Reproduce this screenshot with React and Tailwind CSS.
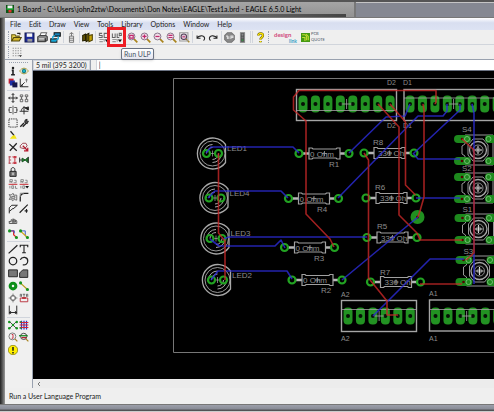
import React, { useState } from 'react';

const menus = ['File', 'Edit', 'Draw', 'View', 'Tools', 'Library', 'Options', 'Window', 'Help'];

const Icon = ({ children, className = 'h-[11px] w-[11px]' }) => (
  <svg
    className={`block shrink-0 ${className}`}
    viewBox="0 0 16 16"
    fill="none"
    stroke="#222"
    strokeWidth="1.5"
    aria-hidden="true"
  >
    {children}
  </svg>
);

const Magnifier = ({ color = '#c02a6c', children }) => (
  <Icon>
    <path d="M10 10l5 5" stroke="#a9831c" strokeWidth="2.5" />
    <circle cx="6.5" cy="6.5" r="5" fill="#f0dfe8" stroke="#7d6a80" strokeWidth="1.3" />
    <g stroke={color} strokeWidth="1.8">{children}</g>
  </Icon>
);

const Grip = ({ vertical }) =>
  vertical ? (
    <span className="mx-px h-3 border-l border-dotted border-gray-400" />
  ) : (
    <span className="mx-1 border-t border-dotted border-gray-400" />
  );

const Separator = () => <span className="h-3 w-px shrink-0 bg-gray-300" />;

/* ---------- action toolbar icons ---------- */
const actionIcons = {
  open: (
    <Icon>
      <path d="M1 13V4h5l1 2h5v3" fill="#e8d44d" stroke="#6b5c10" />
      <path d="M1 13l3-5h11l-3 5z" fill="#d2b52a" stroke="#51460b" />
      <path d="M9 2h4v2" />
    </Icon>
  ),
  save: (
    <Icon>
      <path d="M1.500 1.500h13v13h-13z" fill="#1c2a9a" stroke="#10164d" />
      <path d="M4 2h8v5H4z" fill="#f5f5f5" stroke="none" />
      <path d="M5 10h7v4H5z" fill="#999" stroke="none" />
    </Icon>
  ),
  print: (
    <Icon>
      <path d="M4 6l2-5h8l-2 5" fill="#fff" stroke="#666" />
      <path d="M1 7l3-2h9l2 2v5l-3 2H1z" fill="#888" stroke="#444" />
      <path d="M3 10h8" stroke="#eee" />
      <path d="M12 9v4" stroke="#222" />
    </Icon>
  ),
  cam: (
    <Icon>
      <path d="M6 1h9v5H6z" fill="#1683b8" stroke="#111" />
      <path d="M1 10h9v5H1z" fill="#16a8d8" stroke="#222" />
      <path d="M12 6v4L9 12M4 10V7l3-2" stroke="#1aa7d9" strokeWidth="2" />
    </Icon>
  ),
  sheet: (
    <Icon>
      <path d="M5 6h6v9H5zM5 9h6M5 12h6" stroke="#666" strokeWidth="1.2" />
      <path d="M5 3l3-2 3 2M8 1v5" stroke="#666" strokeWidth="1.2" />
    </Icon>
  ),
  library: (
    <Icon>
      <path d="M1 5l4-2v9l-4 1zM6 4l4-2v10l-4 2z" fill="#635400" stroke="#262000" />
      <path d="M10 5l5-1v8l-5 2z" fill="#c5a300" stroke="#4c3f00" />
    </Icon>
  ),
  script: (
    <Icon>
      <path d="M6 2H2v3h4v3H1M13 2H9v6h5" stroke="#666" />
      <path d="M2 11h6M2 14h5M9 10v4" stroke="#999" />
      <path d="M10 11h6l-3 4z" fill="#111" stroke="none" />
    </Icon>
  ),
  ulp: (
    <Icon>
      <path d="M2 2v6h4V2M9 2v6h3M12 6V2h3v3h-3" stroke="#666" />
      <path d="M2 11h6M2 14h5M9 10v4" stroke="#999" />
      <path d="M10 11h6l-3 4z" fill="#111" stroke="none" />
    </Icon>
  ),
  fit: <Magnifier><path d="M4 5h5v4H4z" /></Magnifier>,
  zoomIn: <Magnifier><path d="M3.500 6.500h6M6.500 3.500v6" /></Magnifier>,
  zoomOut: <Magnifier><path d="M3.500 6.500h6" /></Magnifier>,
  redraw: <Magnifier><path d="M3.500 5h6M3.500 8h6" /></Magnifier>,
  select: (
    <Icon>
      <path d="M10 10l5 5" stroke="#a9831c" strokeWidth="2" />
      <path d="M1 1h12v12H1z" stroke="#999" />
      <circle cx="7" cy="7" r="4" fill="#dbc8d5" stroke="#54405a" />
      <path d="M5 7h4" stroke="#c02a6c" />
    </Icon>
  ),
  undo: <Icon><path d="M3 5v4h5M3 9c2-4 10-5 11 0 0 2-1 3-2 3" /></Icon>,
  redo: <Icon><path d="M13 5v4H8M13 9C11 5 3 4 2 9c0 2 1 3 2 3" /></Icon>,
  stop: (
    <Icon>
      <path d="M5 1h6l4 4v6l-4 4H5l-4-4V5z" fill="#888" stroke="#777" />
      <path d="M3 6h2v4M7 6v4M10 10V6h3v2h-3" stroke="#ddd" />
    </Icon>
  ),
  go: (
    <Icon>
      <path d="M5 1h6v14H5z" fill="#555" stroke="#888" />
      <circle cx="8" cy="4" r="1.500" fill="#888" stroke="none" />
      <circle cx="8" cy="8" r="1.500" fill="#777" stroke="none" />
      <circle cx="8" cy="12" r="1.500" fill="#3d8d49" stroke="none" />
    </Icon>
  ),
  help: (
    <Icon>
      <path d="M5 5c0-4 7-4 6.500 0 0 3-3.500 3-3.500 6M8 13v2" stroke="#5d5500" strokeWidth="3.500" />
      <path d="M5 5c0-4 7-4 6.500 0 0 3-3.500 3-3.500 6M8 13v2" stroke="#ffe600" strokeWidth="2" />
    </Icon>
  ),
};

const actionGroups = [
  [['Open', 'open'], ['Save', 'save'], ['Print', 'print'], ['CAM', 'cam']],
  [['Schematic', 'sheet']],
  [['Library', 'library']],
  [['Run SCR', 'script'], ['Run ULP', 'ulp']],
  [['Fit', 'fit'], ['Zoom in', 'zoomIn'], ['Zoom out', 'zoomOut'], ['Redraw', 'redraw'], ['Select', 'select']],
  [['Undo', 'undo'], ['Redo', 'redo']],
  [['Stop', 'stop'], ['Go', 'go']],
];

/* ---------- command palette icons ---------- */
const wirePads = (
  <g fill="#15931f" stroke="none">
    <circle cx="2.500" cy="3" r="2.500" />
    <circle cx="13.500" cy="13.500" r="2.500" />
  </g>
);

const paletteGroups = [
  {
    height: 'h-[24px]',
    tools: [
      ['Info', <><path d="M6 7h2v7M5 14h6" strokeWidth="2.5" /><circle cx="8" cy="3" r="2" fill="#222" stroke="none" /></>],
      ['Show', <><path d="M1 8c4-6 10-6 14 0-4 6-10 6-14 0z" fill="#fff" stroke="#a89a35" /><circle cx="8" cy="8" r="3" fill="#16b6c6" stroke="#12686e" /></>],
      ['Display', <><path d="M1 1h8v8H1z" fill="#c9202b" stroke="none" /><path d="M3 4h8v8H3z" fill="#1c2fa8" stroke="none" /><path d="M7 7h8v8H7z" fill="#17174b" stroke="none" /></>],
      ['Mark', <><path d="M2 1v13h13M2 14l7-7M5 10v4" /><path d="M10 3h4M12 1v6" stroke="#777" /></>],
    ],
  },
  {
    height: 'h-[148px]',
    tools: [
      ['Move', <path d="M8 1v14M1 8h14M6 3l2-2 2 2M6 13l2 2 2-2M3 6L1 8l2 2M13 6l2 2-2 2" />],
      ['Copy', <path d="M2 3h4v3H2zM10 3h4v3h-4zM2 10h4v4H2zM10 10h4v4h-4zM4 6v4M12 6v4" strokeWidth="1.2" stroke="#444" />],
      ['Mirror', <path d="M8 1v14M6 4H2v8h4M10 4h4v8h-4M0 8h3M13 8h3" stroke="#555" />],
      ['Rotate', <><path d="M8 2v13M1 10h14M4 9c0-6 8-7 10-2" /><path d="M10 5l5 3 0-5z" fill="#222" /></>],
      ['Group', <path d="M1.500 1.500h13v13h-13z" strokeDasharray="2 1.500" />],
      ['Change', <><path d="M2 14L8 8M6 14l7-7" strokeWidth="2.200" /><path d="M9 7l1-4 3-1-1 3 3 0-2 4z" fill="#555" /></>],
      ['Paste', <><path d="M4 2l6 7" strokeWidth="2" /><path d="M7 9l4-1 3 6H3z" fill="#f4e51a" stroke="none" /></>],
      null,
      ['Delete', <path d="M2 3l12 11M14 2L3 14" strokeWidth="2" />],
      ['Add', <><path d="M2 9V6l4-4h5l2 4-4 5z" stroke="#9d4450" /><path d="M6 6l8 8M14 9v5H8" stroke="#b5182d" strokeWidth="2" /></>],
      ['Pinswap', <><path d="M2 2v12M1 3h4M1 13h4M3 8h2" stroke="#b4404d" /><path d="M11 2v12M7 3h7M7 13h7M9 5l2-3 2 3M9 11l2 3 2-3" stroke="#c22835" /></>],
      ['Replace', <><path d="M1 4v8M1 8h4M11 8h4M15 3v10" /><path d="M5 5l5 3-5 3zM14 4l-4 4 4 4z" fill="#1b8f2c" stroke="#184f22" /></>],
      ['Lock', <><path d="M5 7V4c0-4 6-4 6 0v3" /><path d="M3 7h10v8H3z" fill="#777" /><path d="M8 9v4" stroke="#fff" /></>],
      null,
      ['Name', <><path d="M3 6V1h4v3H3l4 2M10 2h3v4h-4M3 11v4M6 11h3v4H6zM12 11v4h3" stroke="#888" /><path d="M1 8.500h14" stroke="#c52028" /></>],
      ['Value', <><path d="M3 6V1h4v3H3l4 2M10 2h3v4h-4M3 11v4M6 11h3v4H6z" stroke="#888" /><path d="M1 8.500h14" stroke="#c52028" /><path d="M10 11h6l-3 4z" fill="#111" stroke="none" /></>],
      ['Smash', <path d="M2 4l3 1 3-3 1 3h5v8l-4-1-3 2-1-3-4 1 2-4zM6 7h5v3H6z" stroke="#666" />],
      ['Miter', <><path d="M2 15V9c0-5 3-7 7-7h6" strokeWidth="2" /><path d="M2 8V2h6" stroke="#888" /></>],
      ['Split', <path d="M2 15V6l4-4h9L8 8M2 12l6-5" />],
      ['Optimize', <path d="M1 14L14 1M9 11h5M12 8v6" strokeWidth="1.8" />],
      ['Meander', <path d="M2 8v4h12V8M2 9h3V6h2v5M9 11V5H7M9 5h1v5h2V6l2 2" stroke="#555" />],
      null,
      ['Route', <><path d="M3 3h6v6l4 4" stroke="#e02727" strokeWidth="2" /><path d="M3 3h7v4" stroke="#304fd0" />{wirePads}</>],
      ['Ripup', <><path d="M3 3h7v8l4 3" stroke="#3857cb" /><path d="M2 3l12 11" stroke="#d0a617" strokeWidth="2" />{wirePads}</>],
    ],
  },
  {
    height: 'h-[73px]',
    tools: [
      ['Wire', <path d="M1 15L15 2" strokeWidth="2" />],
      ['Text', <path d="M2 5V2h12v3M8 2v12M5 14h6" strokeWidth="1.8" />],
      ['Circle', <circle cx="8" cy="8" r="6" strokeWidth="2" />],
      ['Arc', <path d="M2 6c3-6 12-5 12 2 0 5-4 7-8 6" strokeWidth="2" />],
      ['Rect', <path d="M1 3h14v11H1z" fill="#777" />],
      ['Polygon', <path d="M1 15V8l5-5h8v12z" fill="#777" />],
      ['Via', <><circle cx="8" cy="8" r="7" fill="#0c8e18" stroke="none" /><circle cx="8" cy="8" r="2" fill="#f4f4f4" stroke="none" /></>],
      ['Signal', <><path d="M2 3l12 11" stroke="#b69b16" strokeWidth="1.800" />{wirePads}</>],
      ['Hole', <><circle cx="8" cy="8" r="4" stroke="#555" /><path d="M8 1v14M1 8h14" stroke="#777" /><circle cx="8" cy="8" r="2" fill="#fff" stroke="none" /></>],
      ['Attribute', <><path d="M2 6V2h2v4M6 2h4M8 2v4M12 6V2h2v4" stroke="#666" /><path d="M2 8h12v6H2z" stroke="#b9323c" /><path d="M5 8h6" stroke="#b9323c" strokeWidth="3" /></>],
      ['Dimension', <path d="M2 1v14M14 1v14M2 12h12M5 10l-3 2 3 2M11 10l3 2-3 2" />],
      null,
    ],
  },
  {
    height: 'h-[37px]',
    tools: [
      ['Ratsnest', <><path d="M2 2l12 12M14 2L2 14" stroke="#444" /><g fill="#15931f" stroke="none"><circle cx="2" cy="3" r="2" /><circle cx="14" cy="3" r="2" /><circle cx="2" cy="13" r="2" /><circle cx="14" cy="13" r="2" /><circle cx="8" cy="8" r="2" /></g></>],
      ['Auto', <><path d="M4 1v14M8 1v14M12 1v14" stroke="#2536c5" strokeWidth="2" /><path d="M1 4h14M1 8h14M1 12h14" stroke="#d52539" strokeWidth="1.800" /><path d="M1 3h3M1 13h3" stroke="#15931f" strokeWidth="2" /></>],
      ['ERC', <><path d="M11 11l4 4" stroke="#a9831c" strokeWidth="2" /><circle cx="7" cy="7" r="5.500" stroke="#777" /><path d="M6 4h2v6H6" stroke="#c6283b" /></>],
      ['DRC', <><path d="M11 11l4 4" stroke="#a9831c" strokeWidth="2" /><circle cx="7.500" cy="7" r="5" stroke="#444" /><path d="M0 6h14" stroke="#16801e" strokeWidth="2" /><path d="M4 9h8" stroke="#b52335" strokeWidth="2" /></>],
      ['Errors', <><circle cx="8" cy="8" r="7.500" fill="#fff000" stroke="#9b921d" /><path d="M8 3v6M8 11v2.500" strokeWidth="2.500" /></>],
      null,
    ],
  },
];

/* ---------- board drawing ---------- */
const blueTraces = [
  '206,153 211,147 293,147 299,153',
  '208,198 215,191 281,191 288,198',
  '223,239 229,237 367,237',
  '210,239 219,246 275,246 281,240 285,248',
  '211,280 218,271 287,271 292,279',
  '349,153 386,117 405,116 410,104',
  '338,198 418,116 443,116 447,111 447,104',
  '414,153 460,110 460,104',
  '413,153 418,159 460,159',
  '416,198 460,198',
  '472,104 474,113 474,284',
  '342,280 418,217',
  '373,316 430,259 464,259',
];

const redTraces = [
  '435,104 436,102 436,90.5 299,90.5 293.500,97 293.500,110 306,121 306,214 330,239 334,247',
  '218.500,153 218.500,233 225,241 225,280',
  '378,104 399,127 399,215 417,233 420,240 462,240',
  '390,104 405.500,122 405.500,185 415.500,195',
  '423,104 424,110 424,197 420,211 418,217',
  '364,153 368.500,160 368.500,278 387,301 387,315 398,315',
  '420,284 462,284',
  '462,139 474,150 474,253 466,260',
];

const leds = [
  { name: 'LED1', x: 212.5, y: 153.5 },
  { name: 'LED4', x: 215, y: 198 },
  { name: 'LED3', x: 216, y: 238.500 },
  { name: 'LED2', x: 217.5, y: 280 },
];

const resistors = [
  { name: 'R1', x: 299, y: 153.5, lx: 329, ly: 167 },
  { name: 'R4', x: 288.5, y: 198.5, lx: 317, ly: 212 },
  { name: 'R3', x: 284.5, y: 247.5, lx: 314, ly: 261 },
  { name: 'R2', x: 292, y: 280, lx: 321, ly: 293 },
  { name: 'R8', x: 364, y: 153, lx: 373, ly: 145, wide: true },
  { name: 'R6', x: 366, y: 198, lx: 375, ly: 190, wide: true },
  { name: 'R5', x: 367, y: 237.5, lx: 377, ly: 229, wide: true },
  { name: 'R7', x: 370.5, y: 282, lx: 380, ly: 275, wide: true },
];

const headers = [
  { name: 'D2', x: 296.5, y: 89.5, w: 100, mid: 110.5, first: 303, count: 8, padY: 104, lx: 387, top: 85, bottom: 128 },
  { name: 'D1', x: 404, y: 89.5, w: 110, mid: 98, first: 410, count: 8, padY: 104, lx: 403, top: 85, bottom: 128 },
  { name: 'A2', x: 341.5, y: 300.5, w: 75, mid: 309.5, first: 348, count: 6, padY: 316, lx: 341, top: 297, bottom: 341 },
  { name: 'A1', x: 429.5, y: 300, w: 90, mid: 309.5, first: 435.5, count: 6, padY: 316, lx: 429, top: 296, bottom: 341 },
];

const switches = [
  { name: 'S4', x: 478, y: 150, ly: 132 },
  { name: 'S2', x: 478, y: 188, ly: 171 },
  { name: 'S1', x: 478.5, y: 229, ly: 212 },
  { name: 'S3', x: 479.5, y: 271, ly: 254 },
];

const Pad = ({ x, y, r = 3.500 }) => (
  <circle cx={x} cy={y} r={r} fill="none" stroke="#22a322" strokeWidth="2.200" />
);

const Led = ({ name, x, y }) => (
  <g fill="none" stroke="#a8a8a8">
    <path d={`M${x + 13} ${y - 9}A15.500 15.500 0 1 0 ${x + 13} ${y + 9}z`} strokeWidth="1.300" />
    <circle cx={x} cy={y} r="12.500" strokeWidth="0.900" />
    <path d={`M${x - 9} ${y}a9 9 0 0 1 9-9M${x - 6} ${y}a6 6 0 0 1 6-6M${x + 9} ${y}a9 9 0 0 1-9 9M${x + 6} ${y}a6 6 0 0 1-6 6`} />
    <path d={`M${x - 3} ${y}h6M${x} ${y - 3}v6`} strokeWidth="0.700" />
    <Pad x={x - 6} y={y} />
    <Pad x={x + 6} y={y} />
    <text x={x + 14.5} y={y - 2.500} fontSize="8" fill="#8d8d8d" stroke="none">{name}</text>
  </g>
);

const Resistor = ({ name, x, y, lx, ly, wide }) => (
  <g fill="none" stroke="#a0a0a0">
    <path d={`M${x + 3} ${y}h7M${x + 41} ${y}h6`} stroke="#b5b5b5" strokeWidth="2.500" />
    <path d={`M${x + 10} ${y - 5.500}h3l1 1h23l1-1h3v11h-3l-1-1h-23l-1 1h-3z`} strokeWidth="1.200" />
    <path d={`M${x + 23} ${y}h5M${x + 25.5} ${y - 2.500}v5`} strokeWidth="0.800" />
    <Pad x={x} y={y} />
    <Pad x={x + 50} y={y} />
    <text x={wide ? x + 14 : x + 11} y={y + 3} fontSize="8" fill="#909090" stroke="none">
      {wide ? '330 Oh' : '0 Ohm'}
    </text>
    <text x={lx} y={ly} fontSize="8" fill="#8d8d8d" stroke="none">{name}</text>
  </g>
);

const Header = ({ name, x, y, w, mid, first, count, padY, lx, top, bottom }) => (
  <g>
    {Array.from({ length: count }, (_, i) => (
      <g key={i}>
        <rect x={first + i * 12.45 - 4.500} y={padY - 8.5} width="9" height="17" rx="4" fill="#229222" />
        <circle cx={first + i * 12.45} cy={padY} r="2" fill="#061006" />
      </g>
    ))}
    <rect x={x} y={y} width={w} height="31" fill="none" stroke="#a5a5a5" strokeWidth="1.400" />
    <path d={`M${x} ${mid}h${w}`} stroke="#a5a5a5" strokeWidth="0.800" />
    <path
      d={`M${first + (count / 2 - 0.5) * 12.45 - 5} ${padY}h10M${first + (count / 2 - 0.5) * 12.45} ${padY - 5}v10`}
      stroke="#a5a5a5"
      strokeWidth="0.800"
    />
    <text x={lx} y={top} fontSize="7" fill="#8d8d8d">{name}</text>
    <text x={lx} y={bottom} fontSize="7" fill="#8d8d8d">{name}</text>
  </g>
);

const Switch = ({ name, x, y, ly }) => (
  <g fill="none" stroke="#a8a8a8">
    <path d={`M${x - 13} ${y - 15}h28v30h-28v-9l-3-2v-8l3-2z`} strokeWidth="0.900" />
    <path d={`M${x - 10} ${y - 5}l5-6h10l5 6v10l-5 6h-10l-5-6z`} strokeWidth="0.900" />
    {[-11, 11].map((dy) => (
      <g key={dy}>
        <rect x={x - 24} y={y + dy - 4} width="17" height="8" rx="4" fill="#1d891d" stroke="none" />
        <rect x={x + 7} y={y + dy - 4} width="16" height="8" rx="4" fill="#1d891d" stroke="none" />
        <circle cx={x - 16} cy={y + dy} r="1.300" fill="#500" stroke="none" />
        <circle cx={x - 11} cy={y + dy} r="2.500" stroke="#71bd71" />
        <circle cx={x + 10.5} cy={y + dy} r="2.500" stroke="#71bd71" />
      </g>
    ))}
    <circle cx={x} cy={y} r="8.500" fill="#080808" strokeWidth="1.300" />
    <circle cx={x} cy={y} r="5" strokeWidth="0.800" />
    <path d={`M${x - 4} ${y}h8M${x} ${y - 4}v8`} stroke="#ddd" />
    <circle cx={x} cy={y} r="2.200" strokeWidth="0.700" />
    <text x={x - 16} y={ly} fontSize="8" fill="#8d8d8d" stroke="none">{name}</text>
  </g>
);

const Board = () => (
  <svg
    className="block h-[308px] w-[461px] shrink-0 font-['Liberation_Sans',sans-serif]"
    viewBox="33 71 461 308"
    role="img"
    aria-label="Board"
  >
    <path d="M500 78.500H173.500V352.500H500" fill="none" stroke="#777" />
    {headers.map((header) => <Header key={header.name} {...header} />)}
    {switches.map((sw) => <Switch key={sw.name} {...sw} />)}
    {leds.map((led) => <Led key={led.name} {...led} />)}
    {resistors.map((resistor) => <Resistor key={resistor.name} {...resistor} />)}
    <circle cx="417.500" cy="217" r="7" fill="#209020" />
    <circle cx="417.500" cy="217" r="1.500" fill="#400" />
    <g fill="none" strokeWidth="1.600" strokeLinejoin="round" opacity="0.8">
      {blueTraces.map((points) => <polyline key={points} points={points} stroke="#2c2cd8" />)}
      {redTraces.map((points) => <polyline key={points} points={points} stroke="#c82828" />)}
    </g>
  </svg>
);

const ToolButton = ({ label, icon, active, onSelect }) => (
  <button type="button" aria-label={label} onClick={onSelect} className="relative flex h-3 w-[13px] items-center justify-center">
    {icon}
    {active && (
      <>
        <span className="absolute -left-[3px] -top-1 h-5 w-[19px] border-[3px] border-[#ed1c24]" />
        <span className="absolute left-[11px] top-[17px] z-10 whitespace-nowrap rounded-xs border border-gray-500 bg-linear-to-b from-white to-[#e4e5f0] px-0.5 text-[7px] leading-[10px] text-gray-600 shadow-sm">
          Run ULP
        </span>
      </>
    )}
  </button>
);

const App = () => {
  const [activeTool, setActiveTool] = useState('ulp');

  return (
    <div className="flex min-h-screen flex-col overflow-hidden bg-linear-to-r from-[#222] to-[#999] to-[5px] font-['Lato','Noto_Sans',sans-serif] text-[7px] text-[#222]">
      {/* title bar */}
      <header className="flex h-[18px] border-b border-t-2 border-b-[#777] border-t-[#555] bg-[#858892] shadow-[inset_0_1px_0_#c5c5c5]">
        <div className="flex w-[72%] shrink-0 flex-col border-r-2 border-[#777] bg-linear-to-b from-[#a5a5a5] to-[#929292] pl-1.5">
          <div className="flex h-3 items-center pt-px">
            <svg className="mr-[3px] h-2 w-2 shrink-0" viewBox="0 0 16 16" aria-hidden="true">
              <path d="M0 0h16v16H0z" fill="#0a5515" />
              <path d="M3 1h10v6H3z" fill="#f3f3f3" />
              <path d="M5 10h6v5H5z" fill="#e23030" />
              <path d="M1 8h14" stroke="#2bd642" strokeWidth="2" />
            </svg>
            <h1 className="whitespace-nowrap text-[7px] leading-3 text-black">
              1 Board - C:\Users\john2ztw\Documents\Don Notes\EAGLE\Test1a.brd - EAGLE 6.5.0 Light
            </h1>
          </div>
          <span className="ml-[30%] mr-2 h-[3px] bg-linear-to-r from-transparent via-[#666] via-60% to-[#444]" />
        </div>
      </header>

      <div className="ml-[5px] flex flex-1 flex-col">
        <nav className="flex h-3 items-center gap-2 bg-linear-to-b from-white via-[#d8def0] via-40% to-[#dde3f3] pl-[5px] leading-3">
          {menus.map((menu) => (
            <button key={menu} type="button">{menu}</button>
          ))}
        </nav>

        {/* action toolbar */}
        <div className="flex h-[15px] items-center border-b border-gray-300 bg-[#efefef] pl-0.5">
          <Grip vertical />
          <div className="flex items-center gap-px">
            {actionGroups.map((group, index) => (
              <React.Fragment key={group[0][0]}>
                {index > 0 && <Separator />}
                <div className="flex items-center">
                  {group.map(([label, name]) => (
                    <ToolButton
                      key={name}
                      label={label}
                      icon={actionIcons[name]}
                      active={name === 'ulp' && activeTool === name}
                      onSelect={() => setActiveTool(name)}
                    />
                  ))}
                </div>
              </React.Fragment>
            ))}
          </div>
          <div className="flex items-center gap-px pl-px">
            <Separator />
            <Separator />
            <ToolButton label="Help" icon={actionIcons.help} onSelect={() => setActiveTool('help')} />
          </div>
          <Grip vertical />
          <a href="#design-link" className="ml-1 flex w-[23px] flex-col">
            <span className="text-[6px] font-bold leading-[7px] text-[#d0487c]">design</span>
            <span className="self-end text-[5px] font-bold leading-[6px] text-[#3aa0c8]">link</span>
          </a>
          <a href="#pcb-quote" className="ml-1 flex items-center gap-px">
            <svg className="h-[9px] w-[9px]" viewBox="0 0 16 16" aria-hidden="true">
              <path d="M0 0h16v16H0z" fill="#459913" />
              <path d="M2 3h5l3 3v7M9 2l4 4v7M2 8h5v6" fill="none" stroke="#c1dd32" strokeWidth="2" />
            </svg>
            <span className="flex flex-col text-[4px] leading-[6px] text-gray-600">
              <span>PCB</span>
              <span>QUOTE</span>
            </span>
          </a>
        </div>

        {/* parameter toolbar */}
        <div className="flex h-[15px] items-center border-b border-gray-400 bg-[#efefef] pl-0.5">
          <Grip vertical />
          <button type="button" aria-label="Grid" className="ml-0.5">
            <Icon className="h-2.5 w-2.5">
              <path d="M1 2h14M1 6h14M1 10h14M1 14h10" stroke="#888" strokeDasharray="2 2" />
              <path d="M11 13h5l-2.500 3z" fill="#222" stroke="none" />
            </Icon>
          </button>
        </div>

        <div className="flex flex-1">
          <aside className="flex w-7 shrink-0 flex-col border-r border-gray-400 bg-[#f0f0f0]">
            <div className="flex h-[5px] flex-col justify-center">
              <Grip />
            </div>
            {paletteGroups.map((group, index) => (
              <React.Fragment key={group.height}>
                {index > 0 && <span className="mx-0.5 my-px h-px bg-gray-300" />}
                <div className={`grid auto-rows-fr grid-cols-2 items-center justify-items-center px-0.5 ${group.height}`}>
                  {group.tools.map((tool, i) =>
                    tool ? (
                      <button key={tool[0]} type="button" aria-label={tool[0]}>
                        <Icon className="h-2.5 w-2.5">{tool[1]}</Icon>
                      </button>
                    ) : (
                      <span key={i} />
                    )
                  )}
                </div>
              </React.Fragment>
            ))}
          </aside>

          <main className="flex min-w-0 flex-1 flex-col">
            <div className="flex h-[11px] border-b border-gray-500 bg-white">
              <output className="shrink-0 whitespace-nowrap border border-gray-300 bg-[#f0f0f0] px-0.5 text-[7px] leading-[9px]">
                5 mil (395 3200)
              </output>
              <span className="w-1.5 shrink-0 border-l border-gray-400 bg-[#f0f0f0]" />
              <input
                type="text"
                aria-label="Command"
                defaultValue="|"
                className="min-w-0 flex-1 border-l border-gray-300 bg-white pl-0.5 text-[7px] leading-[9px] outline-none"
              />
            </div>
            <div className="flex-1 overflow-hidden bg-black">
              <Board />
            </div>
            <div className="flex h-[9px] items-center bg-[#ececec] pl-1">
              <button type="button" aria-label="Scroll left">
                <svg className="h-1 w-1" viewBox="0 0 8 8" aria-hidden="true">
                  <path d="M6 0L2 4l4 4" fill="none" stroke="#777" strokeWidth="2" />
                </svg>
              </button>
            </div>
          </main>
        </div>

        <footer className="h-4 bg-[#efefef] pl-1 text-[7px] leading-4">Run a User Language Program</footer>
      </div>

      <div className="h-2 border-b border-t border-b-[#ccc] border-t-[#777] bg-linear-to-b from-[#9c9faa] via-[#8b8e99] via-60% to-[#444]" />
    </div>
  );
};

export default App;
